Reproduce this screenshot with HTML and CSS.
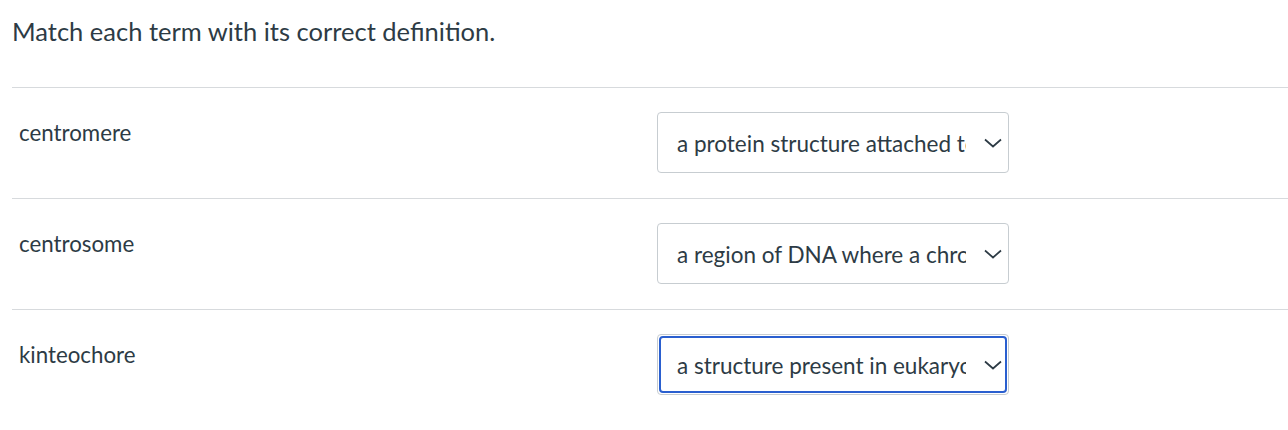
FILE: index.html
```html
<!DOCTYPE html>
<html>
<head>
<meta charset="utf-8">
<link rel="stylesheet" href="styles.css">
</head>
<body>
<div class="quiz">
  <div class="question">Match each term with its correct definition.</div>
  <div class="answers">
    <div class="row">
      <div class="term">centromere</div>
      <div class="choice">
        <div class="select">
          <span class="value">a protein structure attached to the centromere</span>
          <svg class="chev" width="20" height="10" viewBox="0 0 20 10"><path d="M2 1.5 L10 8.5 L18 1.5" fill="none" stroke="#2d3b45" stroke-width="1.7"/></svg>
        </div>
      </div>
    </div>
    <div class="row">
      <div class="term">centrosome</div>
      <div class="choice">
        <div class="select">
          <span class="value">a region of DNA where a chromosome's sister chromatids attach</span>
          <svg class="chev" width="20" height="10" viewBox="0 0 20 10"><path d="M2 1.5 L10 8.5 L18 1.5" fill="none" stroke="#2d3b45" stroke-width="1.7"/></svg>
        </div>
      </div>
    </div>
    <div class="row">
      <div class="term">kinteochore</div>
      <div class="choice">
        <div class="select focused">
          <span class="value">a structure present in eukaryotic cells that organizes microtubules</span>
          <svg class="chev" width="20" height="10" viewBox="0 0 20 10"><path d="M2 1.5 L10 8.5 L18 1.5" fill="none" stroke="#2d3b45" stroke-width="1.7"/></svg>
        </div>
      </div>
    </div>
  </div>
</div>
</body>
</html>
```
FILE: styles.css
```css
html, body {
  margin: 0;
  padding: 0;
  background: #ffffff;
}
body {
  font-family: Lato, "Liberation Sans", sans-serif;
  color: #2d3b45;
}
.quiz {
  padding-left: 12px;
}
.question {
  font-size: 25.5px;
  line-height: 32px;
  padding-top: 15px;
  box-sizing: border-box;
  height: 87px;
}
.row {
  display: grid;
  grid-template-columns: 1fr 1fr;
  border-top: 1px solid #d7dadd;
  padding: 24px 0 25px;
}
.term {
  padding: 6px 7px 0;
  font-size: 22.3px;
  line-height: 30px;
}
.choice {
  padding: 0 7px;
}
.select {
  position: relative;
  height: 59px;
  border: 1px solid #c7cdd1;
  border-radius: 4px;
  display: flex;
  align-items: center;
  padding-left: 19px;
  padding-top: 1px;
  box-sizing: border-box;
  width: 352px;
  height: 61px;
  overflow: hidden;
}
.value {
  font-size: 22.5px;
  white-space: nowrap;
  overflow: hidden;
  width: 289px;
  flex: none;
}
.chev {
  position: absolute;
  right: 5px;
  top: 25px;
}
.select.focused::after {
  content: "";
  position: absolute;
  inset: 1px;
  border: 2px solid #2a5fcf;
  border-radius: 4px;
  pointer-events: none;
}
```
